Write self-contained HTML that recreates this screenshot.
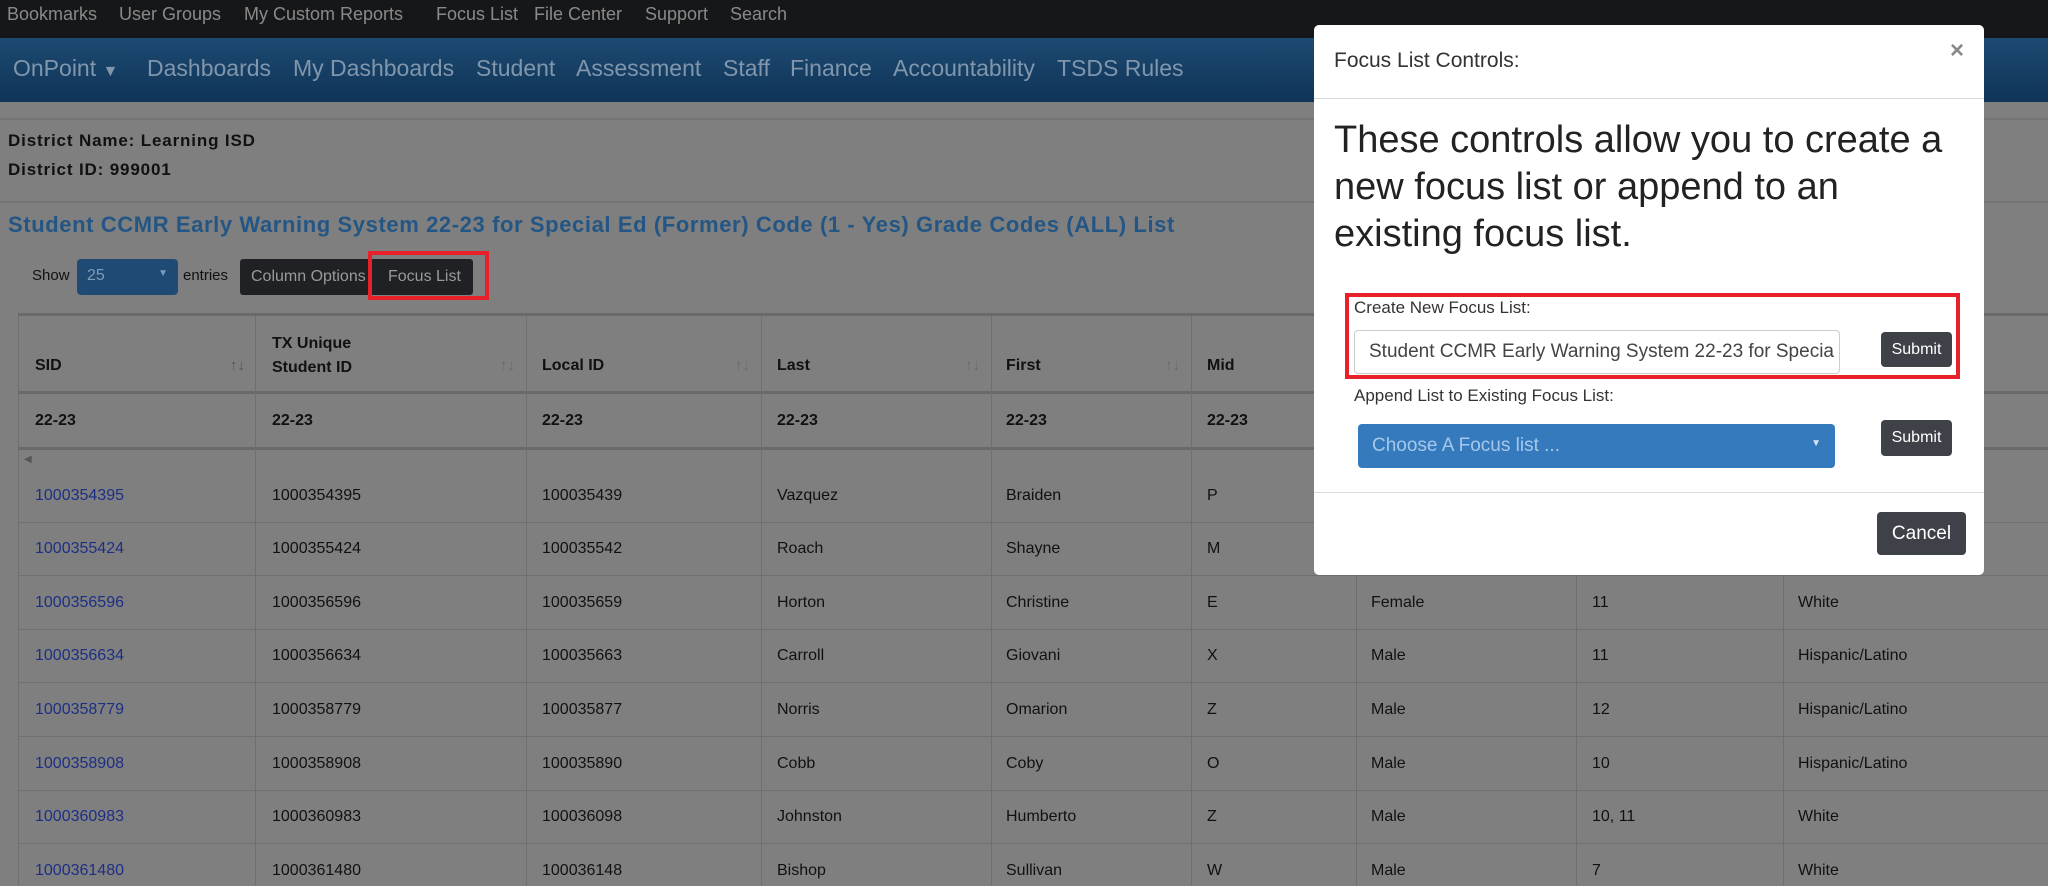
<!DOCTYPE html>
<html><head><meta charset="utf-8"><style>
*{margin:0;padding:0;box-sizing:border-box}
body{width:2048px;height:886px;overflow:hidden;background:#7f7f7f;font-family:"Liberation Sans",Arial,sans-serif;position:relative}
.a{position:absolute;white-space:nowrap}
.top{left:0;top:0;width:2048px;height:38px;background:#161719}
.top span{position:absolute;top:4px;font-size:18px;color:#8a8a8a}
.nav{left:0;top:38px;width:2048px;height:64px;background:linear-gradient(#1d4a72,#0f3457)}
.nav span{position:absolute;top:17px;font-size:23px;color:#8196ab}
.hl{left:0;width:2048px;height:2px;background:#747474}
.t{font-size:16px;color:#111}
.b{font-weight:bold}
.lnk{color:#1d2f85}
.vl{position:absolute;width:1px;background:#6f6f6f}
.hr{position:absolute;left:18px;width:2030px;height:1px;background:#6f6f6f}
.modal{left:1314px;top:25px;width:670px;height:550px;background:#fff;border-radius:5px}
.btn{position:absolute;background:#3e4147;color:#fff;border-radius:4px;text-align:center;font-size:16px}
</style></head><body>
<div class="a top">
<span style="left:7px">Bookmarks</span><span style="left:119px">User Groups</span><span style="left:244px">My Custom Reports</span><span style="left:436px">Focus List</span><span style="left:534px">File Center</span><span style="left:645px">Support</span><span style="left:730px">Search</span>
</div>
<div class="a nav">
<span style="left:13px">OnPoint <small style="font-size:16px">▼</small></span><span style="left:147px">Dashboards</span><span style="left:293px">My Dashboards</span><span style="left:476px">Student</span><span style="left:576px">Assessment</span><span style="left:723px">Staff</span><span style="left:790px">Finance</span><span style="left:893px">Accountability</span><span style="left:1057px">TSDS Rules</span>
</div>
<div class="a hl" style="top:118px"></div>
<div class="a t b" style="left:8px;top:131px;font-size:17px;letter-spacing:0.85px">District Name: Learning ISD</div>
<div class="a t b" style="left:8px;top:160px;font-size:17px;letter-spacing:0.85px">District ID: 999001</div>
<div class="a hl" style="top:201px"></div>
<div class="a b" style="left:8px;top:212px;font-size:22px;letter-spacing:0.6px;color:#235685">Student CCMR Early Warning System 22-23 for Special Ed (Former) Code (1 - Yes) Grade Codes (ALL) List</div>
<div class="a" style="left:32px;top:267px;font-size:15px;color:#111">Show</div>
<div class="a" style="left:77px;top:259px;width:101px;height:36px;background:#1e4a73;border-radius:4px;color:#7f9cb9;font-size:16px;padding:8px 10px">25<span style="position:absolute;right:10px;top:9px;font-size:10px">▼</span></div>
<div class="a" style="left:183px;top:267px;font-size:15px;color:#111">entries</div>
<div class="a" style="left:240px;top:259px;width:233px;height:36px;background:#1f2124;border-radius:3px"></div>
<div class="a" style="left:251px;top:268px;font-size:16px;color:#9a9a9a">Column Options</div>
<div class="a" style="left:388px;top:268px;font-size:16px;color:#9a9a9a">Focus List</div>
<div class="a" style="left:368px;top:251px;width:121px;height:49px;border:4px solid #e8202a"></div>

<div class="hr" style="top:313px;height:3px;background:#6a6a6a"></div>
<div class="hr" style="top:391px;height:3px;background:#6a6a6a"></div>
<div class="hr" style="top:447px;height:3px;background:#6a6a6a"></div>
<div class="hr" style="top:522px"></div><div class="hr" style="top:575px"></div><div class="hr" style="top:629px"></div><div class="hr" style="top:682px"></div><div class="hr" style="top:736px"></div><div class="hr" style="top:790px"></div><div class="hr" style="top:843px"></div>
<div class="vl" style="left:18px;top:316px;height:570px"></div>
<div class="vl" style="left:255px;top:316px;height:570px"></div>
<div class="vl" style="left:526px;top:316px;height:570px"></div>
<div class="vl" style="left:761px;top:316px;height:570px"></div>
<div class="vl" style="left:991px;top:316px;height:570px"></div>
<div class="vl" style="left:1191px;top:316px;height:570px"></div>
<div class="vl" style="left:1356px;top:316px;height:570px"></div>
<div class="vl" style="left:1576px;top:316px;height:570px"></div>
<div class="vl" style="left:1783px;top:316px;height:570px"></div>

<div class="a t b" style="left:35px;top:357px">SID</div>
<div class="a t b" style="left:272px;top:332px;line-height:24px">TX Unique<br>Student ID</div>
<div class="a t b" style="left:542px;top:357px">Local ID</div>
<div class="a t b" style="left:777px;top:357px">Last</div>
<div class="a t b" style="left:1006px;top:357px">First</div>
<div class="a t b" style="left:1207px;top:357px">Mid</div>
<div class="a" style="left:230px;top:357px;color:#555;font-size:15px">↑↓</div>
<div class="a" style="left:500px;top:357px;color:#6a6a6a;font-size:15px">↑↓</div>
<div class="a" style="left:735px;top:357px;color:#6a6a6a;font-size:15px">↑↓</div>
<div class="a" style="left:965px;top:357px;color:#6a6a6a;font-size:15px">↑↓</div>
<div class="a" style="left:1165px;top:357px;color:#6a6a6a;font-size:15px">↑↓</div>
<div class="a t b" style="left:35px;top:412px">22-23</div><div class="a t b" style="left:272px;top:412px">22-23</div><div class="a t b" style="left:542px;top:412px">22-23</div><div class="a t b" style="left:777px;top:412px">22-23</div><div class="a t b" style="left:1006px;top:412px">22-23</div><div class="a t b" style="left:1207px;top:412px">22-23</div>
<div class="a" style="left:24px;top:454px;font-size:10px;color:#555">◀</div>

<div style="position:absolute;left:0;top:0">
<div class="a t" style="top:487px;left:35px"><span class="lnk">1000354395</span></div><div class="a t" style="top:487px;left:272px">1000354395</div><div class="a t" style="top:487px;left:542px">100035439</div><div class="a t" style="top:487px;left:777px">Vazquez</div><div class="a t" style="top:487px;left:1006px">Braiden</div><div class="a t" style="top:487px;left:1207px">P</div>
<div class="a t" style="top:540px;left:35px"><span class="lnk">1000355424</span></div><div class="a t" style="top:540px;left:272px">1000355424</div><div class="a t" style="top:540px;left:542px">100035542</div><div class="a t" style="top:540px;left:777px">Roach</div><div class="a t" style="top:540px;left:1006px">Shayne</div><div class="a t" style="top:540px;left:1207px">M</div>
<div class="a t" style="top:594px;left:35px"><span class="lnk">1000356596</span></div><div class="a t" style="top:594px;left:272px">1000356596</div><div class="a t" style="top:594px;left:542px">100035659</div><div class="a t" style="top:594px;left:777px">Horton</div><div class="a t" style="top:594px;left:1006px">Christine</div><div class="a t" style="top:594px;left:1207px">E</div><div class="a t" style="top:594px;left:1371px">Female</div><div class="a t" style="top:594px;left:1592px">11</div><div class="a t" style="top:594px;left:1798px">White</div>
<div class="a t" style="top:647px;left:35px"><span class="lnk">1000356634</span></div><div class="a t" style="top:647px;left:272px">1000356634</div><div class="a t" style="top:647px;left:542px">100035663</div><div class="a t" style="top:647px;left:777px">Carroll</div><div class="a t" style="top:647px;left:1006px">Giovani</div><div class="a t" style="top:647px;left:1207px">X</div><div class="a t" style="top:647px;left:1371px">Male</div><div class="a t" style="top:647px;left:1592px">11</div><div class="a t" style="top:647px;left:1798px">Hispanic/Latino</div>
<div class="a t" style="top:701px;left:35px"><span class="lnk">1000358779</span></div><div class="a t" style="top:701px;left:272px">1000358779</div><div class="a t" style="top:701px;left:542px">100035877</div><div class="a t" style="top:701px;left:777px">Norris</div><div class="a t" style="top:701px;left:1006px">Omarion</div><div class="a t" style="top:701px;left:1207px">Z</div><div class="a t" style="top:701px;left:1371px">Male</div><div class="a t" style="top:701px;left:1592px">12</div><div class="a t" style="top:701px;left:1798px">Hispanic/Latino</div>
<div class="a t" style="top:755px;left:35px"><span class="lnk">1000358908</span></div><div class="a t" style="top:755px;left:272px">1000358908</div><div class="a t" style="top:755px;left:542px">100035890</div><div class="a t" style="top:755px;left:777px">Cobb</div><div class="a t" style="top:755px;left:1006px">Coby</div><div class="a t" style="top:755px;left:1207px">O</div><div class="a t" style="top:755px;left:1371px">Male</div><div class="a t" style="top:755px;left:1592px">10</div><div class="a t" style="top:755px;left:1798px">Hispanic/Latino</div>
<div class="a t" style="top:808px;left:35px"><span class="lnk">1000360983</span></div><div class="a t" style="top:808px;left:272px">1000360983</div><div class="a t" style="top:808px;left:542px">100036098</div><div class="a t" style="top:808px;left:777px">Johnston</div><div class="a t" style="top:808px;left:1006px">Humberto</div><div class="a t" style="top:808px;left:1207px">Z</div><div class="a t" style="top:808px;left:1371px">Male</div><div class="a t" style="top:808px;left:1592px">10, 11</div><div class="a t" style="top:808px;left:1798px">White</div>
<div class="a t" style="top:862px;left:35px"><span class="lnk">1000361480</span></div><div class="a t" style="top:862px;left:272px">1000361480</div><div class="a t" style="top:862px;left:542px">100036148</div><div class="a t" style="top:862px;left:777px">Bishop</div><div class="a t" style="top:862px;left:1006px">Sullivan</div><div class="a t" style="top:862px;left:1207px">W</div><div class="a t" style="top:862px;left:1371px">Male</div><div class="a t" style="top:862px;left:1592px">7</div><div class="a t" style="top:862px;left:1798px">White</div>
</div>

<div class="a modal">
<div class="a" style="left:20px;top:24px;font-size:21px;color:#333">Focus List Controls:</div>
<div class="a" style="left:636px;top:12px;font-size:24px;font-weight:bold;color:#888">×</div>
<div class="a" style="left:0;top:73px;width:670px;height:1px;background:#d6dbe1"></div>
<div class="a" style="left:20px;top:92px;font-size:38px;line-height:47px;color:#222;white-space:normal;width:630px">These controls allow you to create a new focus list or append to an existing focus list.</div>
<div class="a" style="left:31px;top:268px;width:615px;height:86px;border:4px solid #e8202a"></div>
<div class="a" style="left:40px;top:273px;font-size:17px;color:#333">Create New Focus List:</div>
<div class="a" style="left:40px;top:305px;width:486px;height:44px;border:1px solid #ccc;border-radius:4px;font-size:19px;color:#444;padding:10px 14px;overflow:hidden">Student CCMR Early Warning System 22-23 for Specia</div>
<div class="btn" style="left:567px;top:307px;width:71px;height:35px;line-height:35px">Submit</div>
<div class="a" style="left:40px;top:361px;font-size:17px;color:#333">Append List to Existing Focus List:</div>
<div class="a" style="left:44px;top:399px;width:477px;height:44px;background:#357abd;border-radius:4px;color:#a5c8ea;font-size:19px;padding:11px 14px">Choose A Focus list ...<span style="position:absolute;right:14px;top:14px;font-size:10px;color:#d8e6f4">▼</span></div>
<div class="btn" style="left:567px;top:395px;width:71px;height:36px;line-height:36px">Submit</div>
<div class="a" style="left:0;top:467px;width:670px;height:1px;background:#d6dbe1"></div>
<div class="btn" style="left:563px;top:487px;width:89px;height:43px;line-height:43px;font-size:19px">Cancel</div>
</div>
</body></html>
